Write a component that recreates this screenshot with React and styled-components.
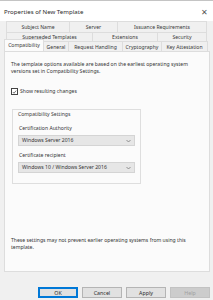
import styled, { createGlobalStyle } from "styled-components";

const GlobalStyle = createGlobalStyle`
  html, body {
    margin: 0;
    padding: 0;
    background: #f0f0f0;
  }
  * {
    box-sizing: border-box;
  }
`;

const Window = styled.div`
  width: 213px;
  height: 300px;
  display: flex;
  flex-direction: column;
  background: #f0f0f0;
  font-family: "Noto Sans", "DejaVu Sans", sans-serif;
  color: #333333;
  border-top: 1px solid #c4c4c4;
  overflow: hidden;
`;

const TitleBar = styled.div`
  height: 20px;
  flex: none;
  display: flex;
  align-items: center;
  justify-content: space-between;
  padding: 0 5px 0 4px;
  background: #ffffff;
  font-size: 6.1px;
  color: #2a2a2a;
`;

const Close = styled.span`
  font-size: 8px;
  color: #555;
  font-weight: 300;
`;

const Body = styled.div`
  flex: 1;
  display: flex;
  flex-direction: column;
  padding: 0 3px 2px 4px;
`;

const TabRows = styled.div`
  display: flex;
  flex-direction: column;
  font-size: 5.1px;
`;

const TabRow = styled.div`
  display: flex;
  height: ${(p) => p.$h}px;
  padding-left: ${(p) => p.$indent}px;
`;

const Tab = styled.div`
  width: ${(p) => p.$w}px;
  flex: none;
  display: flex;
  align-items: center;
  justify-content: center;
  white-space: nowrap;
  border: 1px solid #dddddd;
  border-bottom: none;
  margin-left: -1px;
  background: #f0f0f0;
  color: #383838;

  &:first-child {
    margin-left: 0;
  }
`;

const ActiveTab = styled(Tab)`
  background: #fbfbfb;
  position: relative;
  z-index: 1;
  height: 12px;
  margin-top: -2px;
  margin-bottom: -1px;
  padding-bottom: 1px;
`;

const Panel = styled.div`
  height: 221px;
  flex: none;
  border: 1px solid #dddddd;
  background: #fbfbfb;
  display: flex;
  flex-direction: column;
  padding: 9px 6px 0 6px;
  font-size: 5.1px;
  line-height: 7px;
`;

const Para = styled.p`
  margin: 0;
  white-space: nowrap;
`;

const CheckRow = styled.label`
  display: flex;
  align-items: center;
  gap: 2px;
  margin-top: 13px;
`;

const CheckBox = styled.span`
  width: 7px;
  height: 7px;
  border: 1px solid #444;
  background: #fff;
  display: flex;
  align-items: center;
  justify-content: center;
`;

const Group = styled.div`
  width: 129px;
  height: 75px;
  margin-top: 14px;
  margin-left: 1px;
  border: 1px solid #dedede;
  display: flex;
  flex-direction: column;
  padding: 1px 5px 0 5px;
`;

const GroupTitle = styled.div`
  color: #3a3a3a;
`;

const FieldLabel = styled.div`
  margin-top: ${(p) => p.$mt}px;
  padding-left: 1px;
`;

const Select = styled.div`
  height: 11px;
  margin-top: 3px;
  border: 1px solid #d4d4d4;
  background: #e6e6e6;
  display: flex;
  align-items: center;
  justify-content: space-between;
  padding: 0 3px;
`;

const Note = styled(Para)`
  margin-top: 53px;
`;

const Buttons = styled.div`
  display: flex;
  justify-content: flex-end;
  gap: 4px;
  margin-top: 15px;
`;

const Button = styled.div`
  width: 40px;
  height: 11px;
  display: flex;
  align-items: center;
  justify-content: center;
  font-size: 5.3px;
  background: ${(p) => (p.$disabled ? "#cccccc" : "#e1e1e1")};
  color: ${(p) => (p.$disabled ? "#a0a0a0" : "#2a2a2a")};
  border: 1px solid
    ${(p) => (p.$primary ? "#0078d7" : p.$disabled ? "#c2c2c2" : "#b4b4b4")};
  box-shadow: ${(p) => (p.$primary ? "inset 0 0 0 1px #0078d7" : "none")};
`;

function Chevron() {
  return (
    <svg width="5" height="4" viewBox="0 0 5 4">
      <polyline
        points="0.5,1 2.5,3 4.5,1"
        fill="none"
        stroke="#7a7a7a"
        strokeWidth="0.8"
      />
    </svg>
  );
}

function Check() {
  return (
    <svg width="6" height="6" viewBox="0 0 6 6">
      <polyline
        points="1,3 2.4,4.5 5,1.3"
        fill="none"
        stroke="#333"
        strokeWidth="0.8"
      />
    </svg>
  );
}

const rows = [
  { h: 11, indent: 2, tabs: [["Subject Name", 64], ["Server", 49], ["Issuance Requirements", 90]] },
  { h: 9, indent: 2, tabs: [["Superseded Templates", 87], ["Extensions", 66], ["Security", 50]] },
];

const lastRow = [
  ["General", 26],
  ["Request Handling", 55],
  ["Cryptography", 40],
  ["Key Attestation", 47],
];

export default function App() {
  return (
    <>
      <GlobalStyle />
      <Window>
        <TitleBar>
          <span>Properties of New Template</span>
          <Close>✕</Close>
        </TitleBar>
        <Body>
          <TabRows>
            {rows.map((row, i) => (
              <TabRow key={i} $h={row.h} $indent={row.indent}>
                {row.tabs.map(([name, w]) => (
                  <Tab key={name} $w={w}>
                    {name}
                  </Tab>
                ))}
              </TabRow>
            ))}
            <TabRow $h={10} $indent={0}>
              <ActiveTab $w={40}>Compatibility</ActiveTab>
              {lastRow.map(([name, w]) => (
                <Tab key={name} $w={w}>
                  {name}
                </Tab>
              ))}
            </TabRow>
          </TabRows>
          <Panel>
            <Para>
              The template options available are based on the earliest operating system
              <br />
              versions set in Compatibility Settings.
            </Para>
            <CheckRow>
              <CheckBox>
                <Check />
              </CheckBox>
              Show resulting changes
            </CheckRow>
            <Group>
              <GroupTitle>Compatibility Settings</GroupTitle>
              <FieldLabel $mt={7}>Certification Authority</FieldLabel>
              <Select>
                <span>Windows Server 2016</span>
                <Chevron />
              </Select>
              <FieldLabel $mt={6}>Certificate recipient</FieldLabel>
              <Select>
                <span>Windows 10 / Windows Server 2016</span>
                <Chevron />
              </Select>
            </Group>
            <Note>
              These settings may not prevent earlier operating systems from using this
              <br />
              template.
            </Note>
          </Panel>
          <Buttons>
            <Button $primary>OK</Button>
            <Button>Cancel</Button>
            <Button>Apply</Button>
            <Button $disabled>Help</Button>
          </Buttons>
        </Body>
      </Window>
    </>
  );
}
